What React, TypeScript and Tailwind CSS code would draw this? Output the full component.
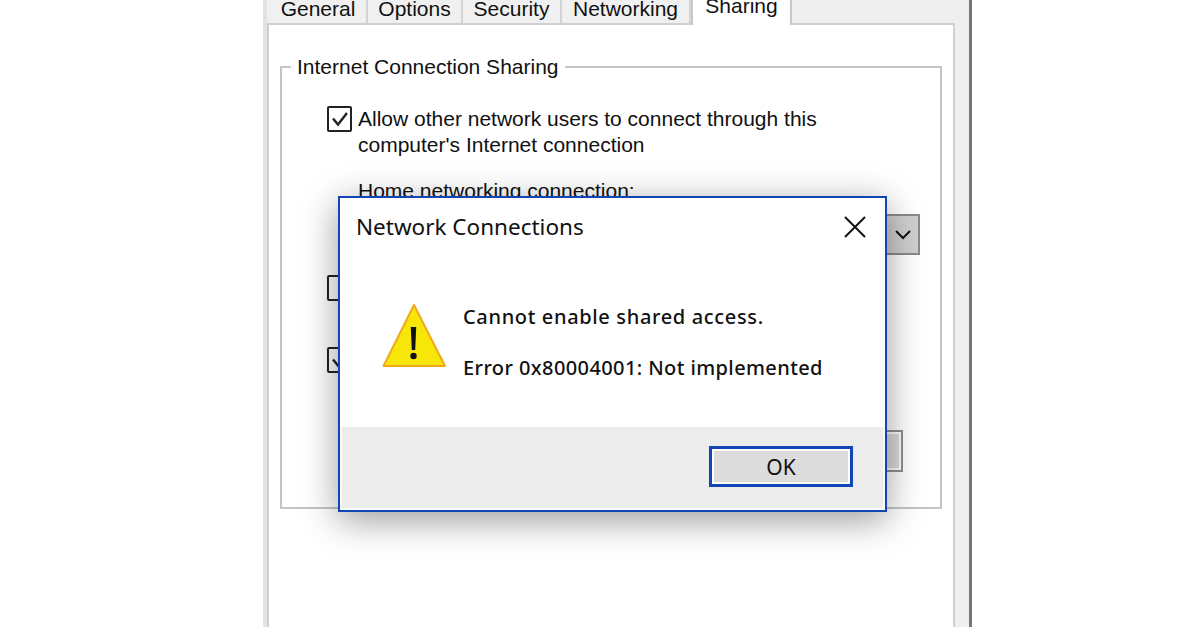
import React from "react";

const tabs = [
  { label: "General", width: "w-[98px]" },
  { label: "Options", width: "w-[95px]" },
  { label: "Security", width: "w-[99px]" },
  { label: "Networking", width: "w-[129px]" },
];

function CheckBox({ checked }: { checked?: boolean }) {
  return (
    <div className="w-[25px] h-[26px] border-[2.5px] border-[#222] rounded-[2px] bg-white flex items-center justify-center shrink-0">
      {checked && (
        <svg width="20" height="20" viewBox="0 0 20 20" fill="none">
          <path d="M3 9.5L8 15.5L17 4" stroke="#222" strokeWidth="2.4" />
        </svg>
      )}
    </div>
  );
}

function WarningIcon() {
  return (
    <svg width="64" height="66" viewBox="0 0 64 66">
      <path d="M32 2L63 63H1.5Z" fill="#f6e60a" stroke="#f0a81e" strokeWidth="2" strokeLinejoin="round" />
      <path d="M28.8 24H34.2L33.2 47H29.8Z" fill="#111" />
      <circle cx="31.5" cy="53" r="3.2" fill="#111" />
    </svg>
  );
}

export default function App() {
  return (
    <div className="relative w-[1200px] h-[627px] overflow-hidden bg-white font-['Liberation_Sans',Arial,sans-serif] text-[#111]">
      {/* property sheet behind the dialog */}
      <div className="ml-[263px] w-[709px] h-[627px] bg-[#efefef] border-l-[4px] border-r-[3px] border-l-[#e2e2e2] border-r-[#777] flex flex-col">
        <div className="flex h-[23px] pl-[3px] shrink-0">
          {tabs.map((t) => (
            <div
              key={t.label}
              className={`${t.width} h-[23px] bg-[#f0f0f0] border-r-2 border-[#d4d4d4] text-[21px] leading-[17px] text-center overflow-hidden`}
            >
              {t.label}
            </div>
          ))}
          <div className="relative z-10 w-[101px] h-[25px] bg-white border-x-2 border-[#c8c8c8] text-[21px] leading-[12px] text-center overflow-hidden">
            Sharing
          </div>
        </div>
        <div className="w-[688px] flex-1 bg-white border-2 border-b-0 border-[#d0d0d0] px-[11px] pt-[28px]">
          <fieldset className="h-[456px] border-2 border-[#c4c4c4]">
            <legend className="ml-[9px] px-[6px] text-[21px] leading-[28px]">Internet Connection Sharing</legend>
            <div className="pl-[45px] pr-[20px]">
              <div className="flex gap-[6px] mt-[25px]">
                <CheckBox checked />
                <div className="text-[21px] leading-[26px]">
                  <p>Allow other network users to connect through this</p>
                  <p>computer's Internet connection</p>
                </div>
              </div>
              <div className="ml-[31px] mt-[20px] text-[21px] leading-[26px]">Home networking connection:</div>
            </div>
          </fieldset>
        </div>
      </div>

      {/* parts of the sheet still visible beside the dialog */}
      <div className="absolute left-[327px] top-[275px]"><CheckBox /></div>
      <div className="absolute left-[327px] top-[347px]"><CheckBox checked /></div>
      <div className="absolute left-[880px] top-[214px] w-[40px] h-[41px] bg-[#cfcfcf] border-2 border-[#8a8a8a] flex items-center justify-center">
        <svg width="16" height="10" viewBox="0 0 16 10" fill="none" className="ml-[6px]">
          <path d="M1 1L8 8L15 1" stroke="#111" strokeWidth="2" />
        </svg>
      </div>
      <div className="absolute left-[860px] top-[430px] w-[43px] h-[42px] bg-[#dcdcdc] border-2 border-[#8f8f8f]">
        <div className="h-full border-2 border-white bg-[#dcdcdc]" />
      </div>

      {/* Network Connections dialog */}
      <div className="absolute left-[338px] top-[196px] w-[549px] h-[316px] bg-white border-[2.5px] border-[#1144b4] shadow-[0_8px_34px_rgba(0,0,0,0.4)] flex flex-col">
        <div className="h-[229px] relative shrink-0">
          <div className="pl-[16px] pt-[15px] text-[22.5px] leading-[28px] font-['Noto_Sans',sans-serif]">Network Connections</div>
          <svg className="absolute right-[18px] top-[17px]" width="24" height="24" viewBox="0 0 24 24" fill="none">
            <path d="M2 2L22 22M22 2L2 22" stroke="#111" strokeWidth="2" />
          </svg>
          <div className="absolute left-[42px] top-[105px]"><WarningIcon /></div>
          <div className="absolute left-[123px] top-[104px] text-[20px] tracking-[0.4px] leading-[30px] font-medium font-['Noto_Sans',sans-serif]">
            <p className="tracking-[0.65px]">Cannot enable shared access.</p>
            <p className="mt-[21px]">Error 0x80004001: Not implemented</p>
          </div>
        </div>
        <div className="flex-1 bg-[#ececec] border-x-2 border-b-2 border-[#f6fafa] flex items-start justify-end pr-[30px] pt-[19px]">
          <button className="w-[144px] h-[41px] bg-[#dcdcdc] border-[3px] border-[#1144b4] font-['Noto_Sans',sans-serif]">
            <span className="h-full flex items-center justify-center border-2 border-white bg-[#dcdcdc] text-[21px] leading-none pt-[1px]">OK</span>
          </button>
        </div>
      </div>
    </div>
  );
}
